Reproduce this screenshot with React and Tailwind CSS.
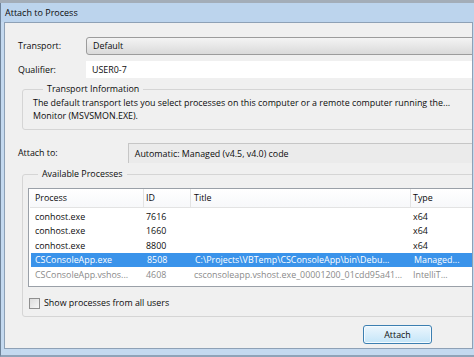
import React from 'react';

const rows = [
  { name: 'conhost.exe', id: '7616', title: '', type: 'x64' },
  { name: 'conhost.exe', id: '1660', title: '', type: 'x64' },
  { name: 'conhost.exe', id: '8800', title: '', type: 'x64' },
  { name: 'CSConsoleApp.exe', id: '8508', title: 'C:\\Projects\\VBTemp\\CSConsoleApp\\bin\\Debu...', type: 'Managed...', selected: true },
  { name: 'CSConsoleApp.vshos...', id: '4608', title: 'csconsoleapp.vshost.exe_00001200_01cdd95a41...', type: 'IntelliT...', dim: true },
];

const App = () => {
  return (
    <div className="w-[474px] h-[357px] overflow-hidden flex flex-col bg-[#bcd4ed] font-['Open_Sans',sans-serif] font-medium text-[8.9px] text-[#0c0c0c]">
      {/* window top edge */}
      <div className="h-[3px] bg-[#a3adb8]" />
      {/* title bar */}
      <div className="h-[19px] flex items-center pl-[4px] border-l border-[#6f8399] text-[9px] text-[#0c0c0c]">
        Attach to Process
      </div>

      <div className="flex-1 flex min-h-0">
        <div className="w-[4px] border-l border-[#6f8399] bg-[#c4d9ef]" />

        {/* dialog body */}
        <div className="flex-1 min-w-0 overflow-hidden bg-[#f0f0f0] border border-[#8ea1b6] pt-[14px] pl-[13px]">
          <div className="w-[600px]">
            {/* Transport */}
            <div className="flex items-center h-[18px]">
              <span className="w-[68px]">Transport:</span>
              <div className="h-[18px] w-[500px] flex items-center pl-[6px] rounded-[3px] border border-[#9c9c9c] bg-gradient-to-b from-[#f4f4f4] to-[#dadada]">
                Default
              </div>
            </div>

            {/* Qualifier */}
            <div className="flex items-center h-[17px] mt-[6px]">
              <span className="w-[68px]">Qualifier:</span>
              <div className="h-[17px] w-[500px] flex items-center pl-[6px] bg-white">USER0-7</div>
            </div>

            {/* Transport Information */}
            <fieldset className="ml-[4px] mt-[4px] border border-[#d5d5d5] rounded-[3px] pl-[10px] pb-[7px]">
              <legend className="ml-[10px] px-[4px] leading-[14px]">Transport Information</legend>
              <p className="leading-[13px] whitespace-nowrap">
                The default transport lets you select processes on this computer or a remote computer running the...
              </p>
              <p className="leading-[13px]">Monitor (MSVSMON.EXE).</p>
            </fieldset>

            {/* Attach to */}
            <div className="flex items-center h-[20px] mt-[13px]">
              <span className="w-[112px]">Attach to:</span>
              <div className="h-[20px] w-[500px] flex items-center pl-[6px] border-t border-l border-[#c6c6c6] bg-[#ebebeb]">
                Automatic: Managed (v4.5, v4.0) code
              </div>
            </div>

            {/* Available Processes */}
            <fieldset className="ml-[4px] mt-[4px] border border-[#d5d5d5] rounded-[3px] pl-[5px] pt-[7px] pb-[7px]">
              <legend className="ml-[10px] px-[4px] leading-[14px]">Available Processes</legend>

              <div className="h-[99px] border border-[#9aa0a8] bg-white pl-[1px]">
                {/* header */}
                <div className="h-[19px] grid grid-cols-[114px_47px_220px_120px] border-b border-[#e3e3e3] bg-gradient-to-b from-white to-[#f7f8fa]">
                  <div className="pl-[5px] flex items-center border-r border-[#e3e3e3]">Process</div>
                  <div className="pl-[2px] flex items-center border-r border-[#e3e3e3]">ID</div>
                  <div className="pl-[3px] flex items-center border-r border-[#e3e3e3]">Title</div>
                  <div className="pl-[2px] flex items-center">Type</div>
                </div>
                <div className="pt-[1px]">
                  {rows.map((r, i) => (
                    <div
                      key={i}
                      className={`h-[14.5px] grid grid-cols-[114px_47px_220px_120px] items-center whitespace-nowrap ${r.selected ? 'bg-[#3a93ea] text-white ml-[1px]' : ''} ${r.dim ? 'text-[#8a8a8a]' : ''}`}
                    >
                      <div className={r.selected ? 'pl-[4px]' : 'pl-[5px]'}>{r.name}</div>
                      <div className="pl-[2px]">{r.id}</div>
                      <div className="pl-[3px] overflow-hidden">{r.title}</div>
                      <div className="pl-[2px]">{r.type}</div>
                    </div>
                  ))}
                </div>
              </div>

              {/* checkbox */}
              <div className="flex items-center mt-[10px] h-[12px] pl-[1px]">
                <div className="w-[11px] h-[11px] border border-[#8f8f8f] bg-gradient-to-br from-[#dcdcdc] to-[#f6f6f6]" />
                <span className="ml-[4px]">Show processes from all users</span>
              </div>
            </fieldset>

            {/* Attach button */}
            <div className="mt-[8px] pl-[345px]">
              <button className="w-[69px] h-[19px] rounded-[3px] border border-[#3c7fb1] bg-gradient-to-b from-[#ecf6fd] to-[#c4e5f8] font-medium text-[8.9px] text-[#0c0c0c] shadow-[inset_0_0_0_1px_#f4fbff]">
                Attach
              </button>
            </div>
          </div>
        </div>

        <div className="w-[1px] bg-[#c4d9ef]" />
      </div>

      {/* bottom frame */}
      <div className="h-[8px] border-l border-[#6f8399] border-b-2 border-b-[#8fa3b8] bg-[#c4d9ef]" />
    </div>
  );
};

export default App;
